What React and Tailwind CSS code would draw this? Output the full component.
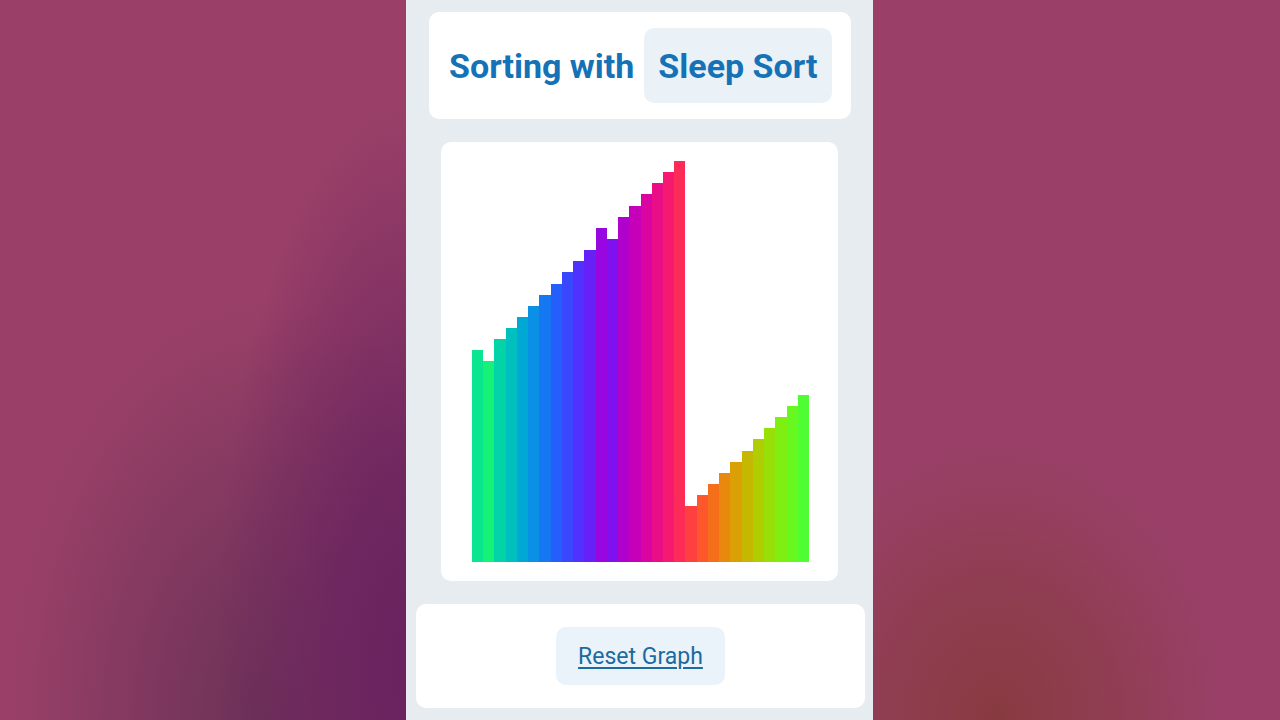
import React from "react";

const values = [19, 18, 20, 21, 22, 23, 24, 25, 26, 27, 28, 30, 29, 31, 32, 33, 34, 35, 36, 5, 6, 7, 8, 9, 10, 11, 12, 13, 14, 15];

function sinebow(t) {
  const tt = 0.5 - t;
  const r = Math.round(255 * Math.pow(Math.sin(Math.PI * tt), 2));
  const g = Math.round(255 * Math.pow(Math.sin(Math.PI * (tt + 1 / 3)), 2));
  const b = Math.round(255 * Math.pow(Math.sin(Math.PI * (tt + 2 / 3)), 2));
  return `rgb(${r},${g},${b})`;
}

export default function App() {
  return (
    <div className="flex h-[720px] w-[1280px] overflow-hidden font-[Roboto,sans-serif]">
      <div className="w-[406px] h-full bg-[#9a4068] bg-[radial-gradient(ellipse_190px_560px_at_100%_92%,rgba(106,34,96,1)_0%,rgba(107,36,95,0.85)_35%,rgba(110,40,95,0)_100%),radial-gradient(ellipse_260px_420px_at_66%_100%,rgba(106,50,86,1)_0%,rgba(108,50,88,0.7)_35%,rgba(110,52,88,0)_100%)]" />
      <div className="w-[467px] h-full bg-[#e6ecf0] flex flex-col">
        <div className="mt-[12px] ml-[23px] mr-[22px] h-[107px] bg-white rounded-[10px] flex items-center pl-[20px]">
          <span className="text-[34px] font-bold text-[#1572b6] leading-none">Sorting with</span>
          <div className="ml-[10px] h-[75px] px-[14px] rounded-[10px] bg-[#eaf2f8] flex items-center">
            <span className="text-[34px] font-bold text-[#1572b6] leading-none">Sleep Sort</span>
          </div>
        </div>
        <div className="mt-[23px] mx-[35px] h-[439px] bg-white rounded-[10px] flex items-end pl-[31px] pb-[19px]">
          <div className="flex items-end w-[337px] h-[401px]">
            {values.map((v, i) => (
              <div
                key={i}
                className="flex-1"
                style={{ height: `${v * 11.14}px`, backgroundColor: sinebow((v - 5) / 32) }}
              />
            ))}
          </div>
        </div>
        <div className="mt-[23px] ml-[10px] mr-[8px] h-[104px] bg-white rounded-[10px] flex items-center justify-center">
          <button className="w-[169px] h-[58px] rounded-[10px] bg-[#eaf3fa] flex items-center justify-center pt-[2px] text-[23px] text-[#1c6aa0] underline underline-offset-[3px] decoration-[1.5px]">
            Reset Graph
          </button>
        </div>
      </div>
      <div className="flex-1 h-full bg-[#9a4068] bg-[radial-gradient(ellipse_230px_280px_at_30%_100%,rgba(136,58,64,1)_0%,rgba(138,60,70,0.7)_45%,rgba(150,64,100,0)_100%)]" />
    </div>
  );
}
